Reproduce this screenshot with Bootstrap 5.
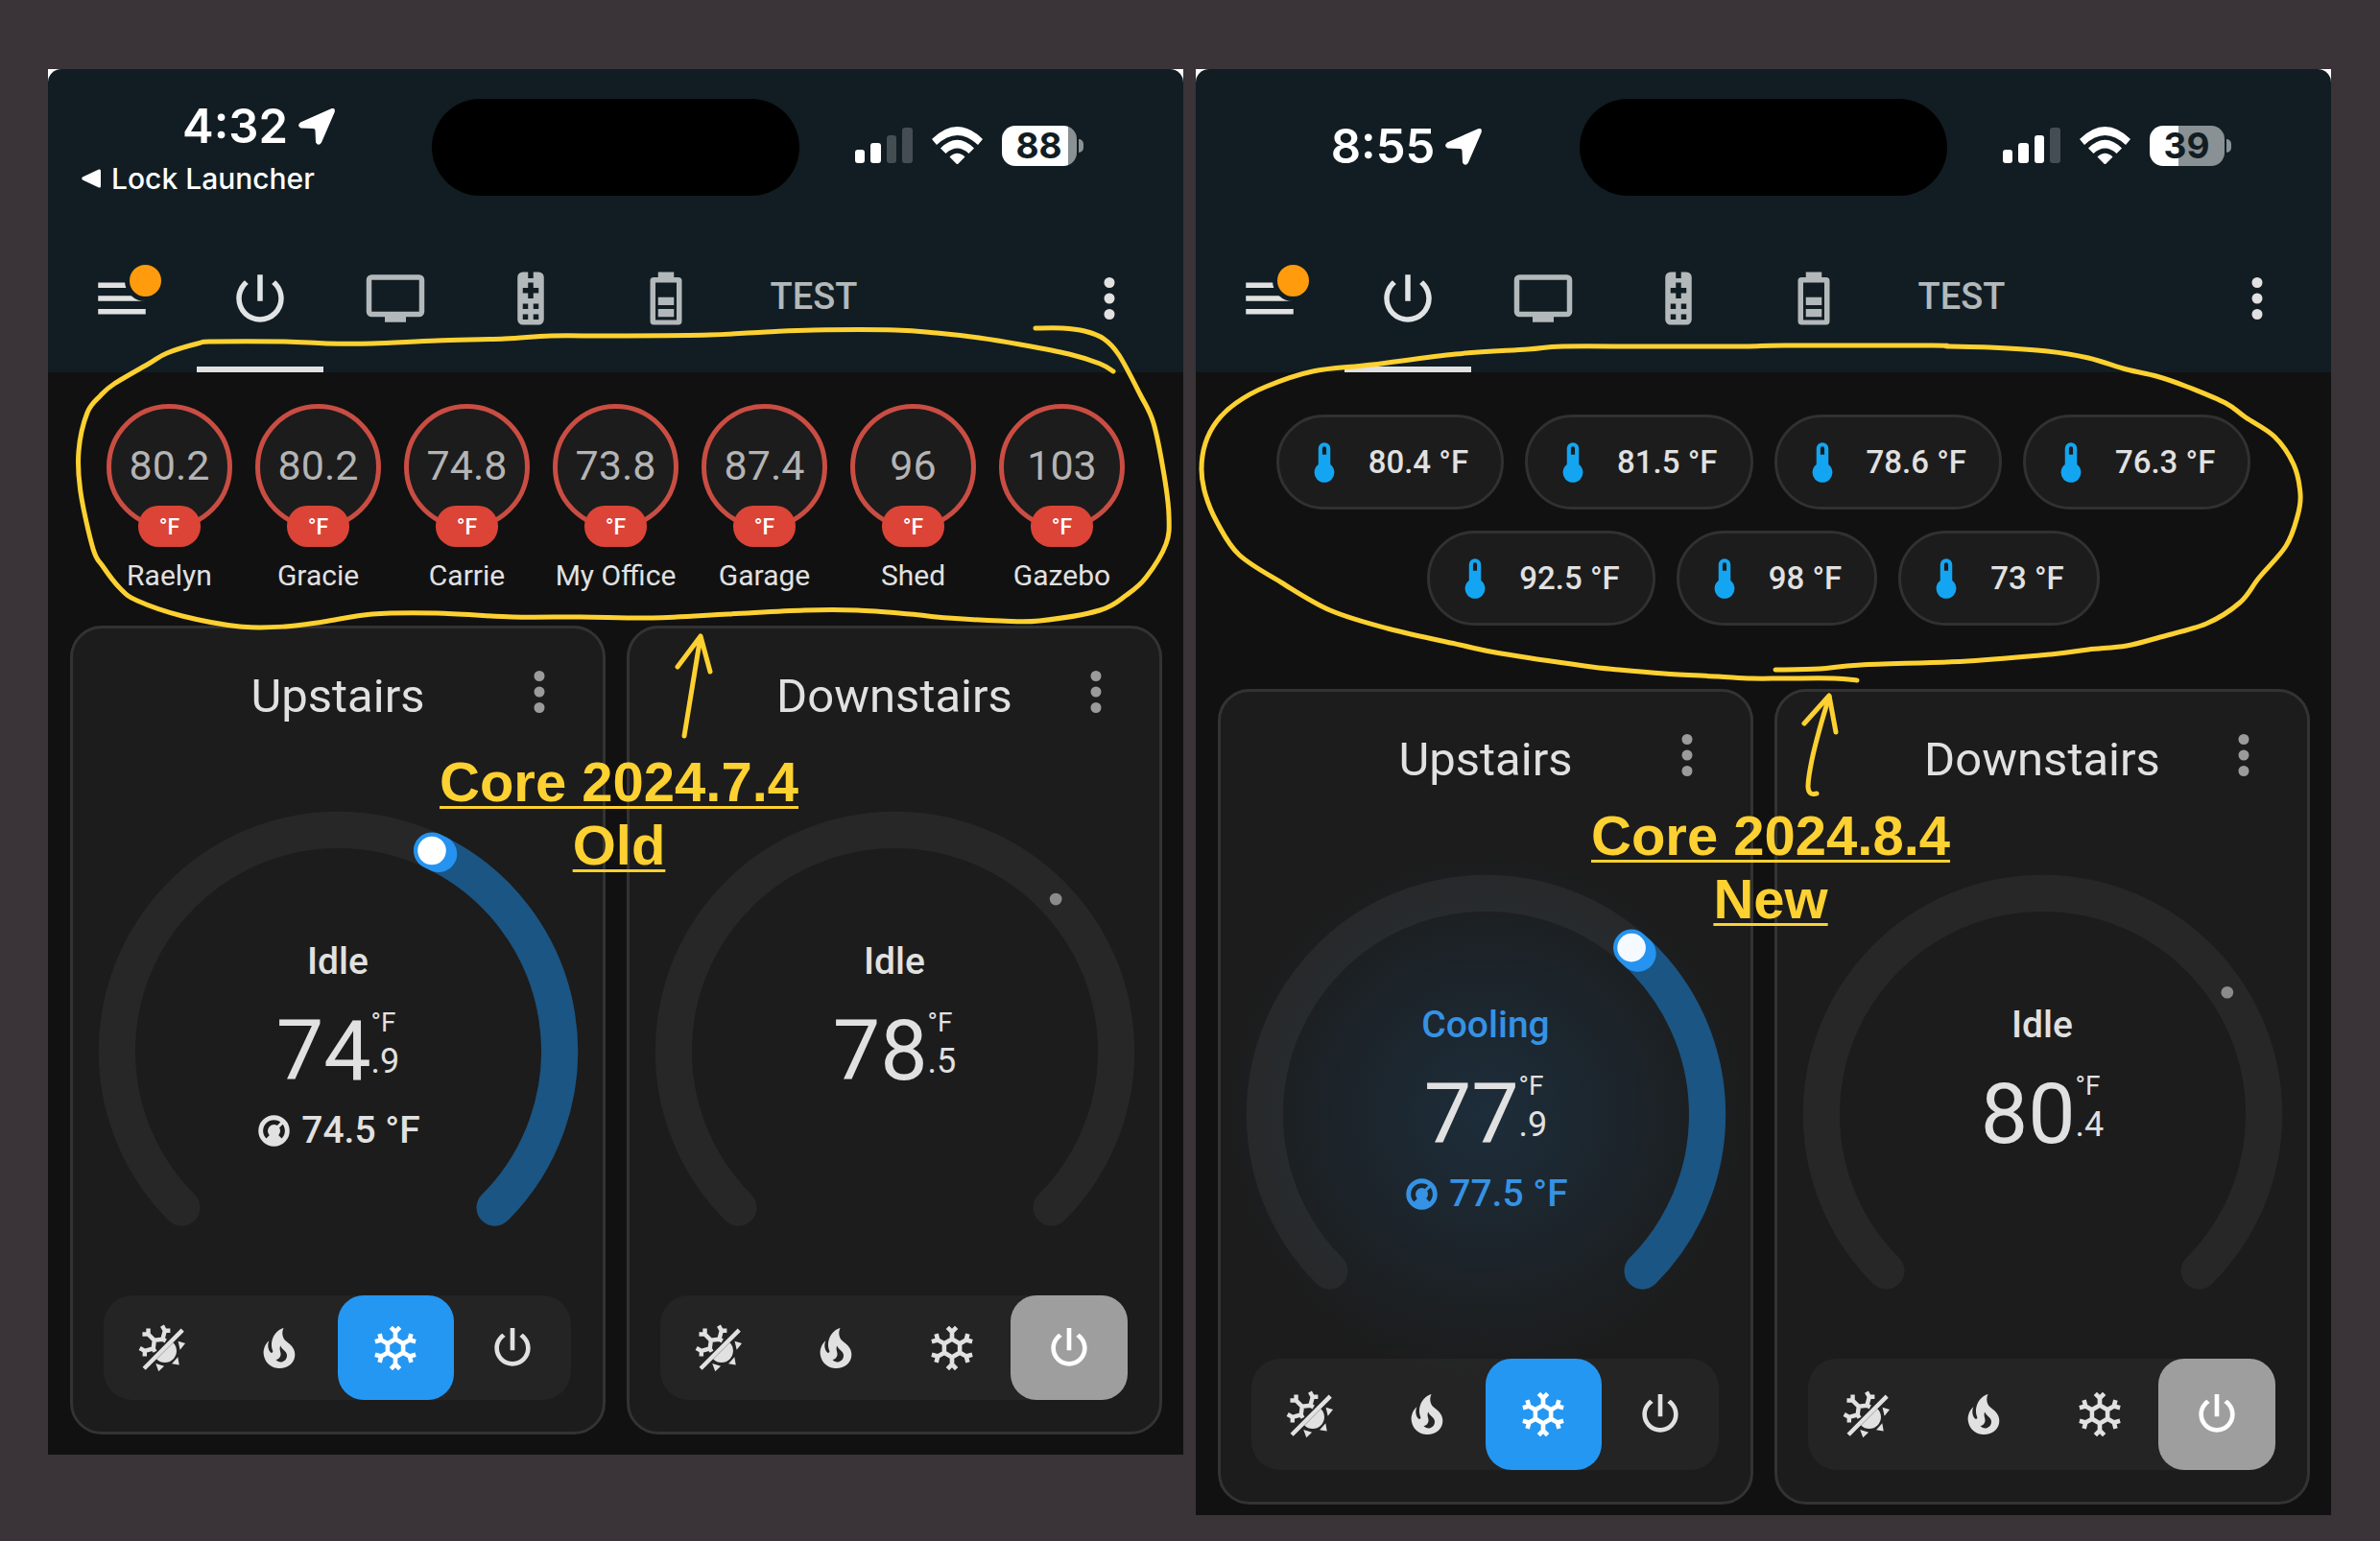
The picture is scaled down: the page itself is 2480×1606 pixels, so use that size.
<!DOCTYPE html>
<html lang="en" data-bs-theme="dark">
<head>
<meta charset="utf-8">
<meta name="viewport" content="width=device-width, initial-scale=1">
<title>Badges: Core 2024.7.4 and Core 2024.8.4</title>
<link rel="stylesheet" href="https://cdn.jsdelivr.net/npm/bootstrap@5.3.0/dist/css/bootstrap.min.css">
<style>
  body { background: #3a3337; font-family: Roboto, "Liberation Sans", sans-serif; color: #e1e1e1; }
  svg { display: block; fill: currentColor; flex: none; }
  .stage { padding: 72px 51px 28px 50px; gap: 13px; }
  .phone { flex: 1 1 0; min-width: 0; background: #fff; }
  .phone-head { background: #111d23; border-radius: 14px 14px 0 0; }
  .phone-body { background: #111; }

  .statusbar { height: 162px; font-family: Inter, "Liberation Sans", sans-serif; color: #fff; }
  .status-side { flex: 1 1 0; }
  .clock { font-size: 49px; line-height: 58px; font-weight: 600; gap: 11px; padding-left: 39px; }
  .clock-solo { margin-top: 52px; }
  .clock-top { margin-top: 31px; }
  .back-link { font-size: 30px; line-height: 44px; font-weight: 500; gap: 11px; margin: 3px 0 0 35px; color: #fff; text-decoration: none; }
  .island { width: 383px; height: 101px; margin-top: 31px; border-radius: 51px; background: #000; }
  .indicators { height: 97px; margin-top: 31px; gap: 20px; padding-right: 47px; }
  .power-level { width: 78px; height: 42px; border-radius: 14px; font-size: 37px; line-height: 42px; font-weight: 700; text-align: center; color: #111d23; }
  .level-88 { background: linear-gradient(90deg, #fff 88%, #8a9194 88%); }
  .level-39 { background: linear-gradient(90deg, #fff 39%, #8a9194 39%); }
  .power-nub { width: 5px; height: 14px; margin-left: 2px; border-radius: 0 7px 7px 0; background: #8a9194; }

  .toolbar { height: 154px; padding: 0 44px; }
  .plain-btn { border: 0; padding: 0; background: none; color: #e1e1e1; }
  .menu-btn { position: relative; }
  .menu-btn::after { content: ""; position: absolute; left: 36px; top: -7px; width: 43px; height: 43px; border: 5px solid #111d23; border-radius: 50%; background: #ff9b0d; }
  .view-tabs { margin-left: 40px; }
  .view-tab { position: relative; width: 141px; height: 154px; border: 0; padding: 0 0 4px; background: none; color: #b3b8ba; font-size: 38px; font-weight: 500; }
  .view-tab svg { margin: 4px auto 0; }
  .view-tab.current { color: #e1e4e5; }
  .view-tab.current::after { content: ""; position: absolute; left: 5px; right: 4px; bottom: 0; height: 6px; background: #e1e1e4; }
  .tab-text { width: 168px; }

  .old-badges { padding: 33px 0; gap: 24px; }
  .old-badge { width: 131px; }
  .ring { position: relative; width: 131px; height: 131px; border: 5px solid #c94d43; border-radius: 50%; background: #1c1c1c; color: #b4b4b4; font-size: 43px; line-height: 119px; text-align: center; }
  .ring-unit { position: absolute; left: 28px; top: 101px; width: 65px; height: 43px; border-radius: 21px; background: #db4437; color: #fff; font-size: 23px; line-height: 45px; font-weight: 500; }
  .old-name { margin-top: 28px; font-size: 30px; line-height: 39px; text-align: center; white-space: nowrap; }

  .new-badges { padding: 44px 44px 66px; gap: 22px; }
  .new-badge { height: 99px; border: 3px solid #313131; border-radius: 50px; background: #1c1c1c; padding: 0 34px 0 22px; gap: 21px; font-size: 33px; font-weight: 500; color: #e1e1e1; }
  .new-badge svg { color: #13a5f1; }

  .cards { gap: 22px; padding: 0 22px 21px 23px; }
  .cards-short { padding-bottom: 11px; }
  .climate { position: relative; flex: 1 1 0; border: 3px solid #333; border-radius: 33px; background: #1c1c1c; padding: 39px 0 33px; }
  .climate h2 { margin: 0 0 83px; font-size: 49px; line-height: 64px; font-weight: 400; text-align: center; color: #e1e1e1; }
  .more-btn { position: absolute; right: 33px; top: 33px; color: #9b9b9b; }
  .dial { position: relative; width: 509px; max-width: 100%; margin: 0 auto; }
  .dial > svg { width: 100%; height: auto; overflow: visible; fill: none; }
  .readout { position: absolute; inset: 137px 0 0; font-size: 39px; line-height: 48px; font-weight: 500; }
  .temp { margin: 19px 0 9px; font-weight: 400; }
  .temp-whole { font-size: 88px; line-height: 100px; }
  .temp-unit { font-size: 28px; line-height: 41px; }
  .temp-part { font-size: 36px; line-height: 41px; }
  .target { gap: 9px; }
  .cooling { color: #3592e4; }
  .modes { height: 109px; margin: 0 33px 0 32px; border-radius: 30px; background: #242424; }
  .modes-tall { height: 116px; }
  .mode { flex: 1 1 0; border: 0; padding: 0; border-radius: 27px; background: none; color: #e1e1e1; }
  .mode.cool-on { background: #2497f3; color: #fff; }
  .mode.off-on { background: #9e9e9e; color: #fff; }

  .ink { position: absolute; left: 0; top: 0; width: 100%; pointer-events: none; fill: none; stroke: #fdd131; stroke-width: 5; stroke-linecap: round; stroke-linejoin: round; }
  .note { position: absolute; left: 408px; top: 710px; font-family: "Liberation Sans", Arial, sans-serif; font-size: 58px; line-height: 66px; font-weight: 700; text-align: center; white-space: nowrap; color: #fdd131; text-decoration: underline 3px; text-underline-offset: 5px; text-decoration-skip-ink: none; }
  .note-new { left: 412px; top: 766px; }
</style>
</head>
<body>

<svg width="0" height="0" class="position-absolute" aria-hidden="true">
  <symbol id="i-arrow" viewBox="0 0 38 38"><path d="M33.500 .4Q39-1.500 37.600 4L24 35.500Q21 40 18 35.500L17.500 23Q17.400 21 15.500 20.900L2.400 20.600Q-2 18 2 14.400Z"/></symbol>
  <symbol id="i-wifi" viewBox="0 0 53 39"><path d="M0 13Q26.500-13 53 13L48 19Q26.500-1 5 19ZM9 22.500Q26.500 5 44 22.500L38.500 28Q26.500 17 14.500 28ZM18.500 31.500Q26.500 24 34.500 31.500L27.600 38.500Q26.500 39.500 25.400 38.500Z"/></symbol>
  <symbol id="i-menu" viewBox="0 0 24 24"><path d="M3 6H21V8H3V6M3 11H21V13H3V11M3 16H21V18H3V16Z"/></symbol>
  <symbol id="i-standby" viewBox="0 0 24 24"><path d="M13,3H11V13H13V3M17.830,5.170L16.410,6.590C18.050,7.910 19,9.900 19,12A7,7 0 0,1 12,19C8.140,19 5,15.880 5,12C5,9.910 5.950,7.910 7.580,6.580L6.170,5.170C4.160,6.870 3,9.370 3,12A9,9 0 0,0 12,21A9,9 0 0,0 21,12C21,9.370 19.840,6.870 17.830,5.170"/></symbol>
  <symbol id="i-tv" viewBox="0 0 24 24"><path d="M21,17H3V5H21M21,3H3A2,2 0 0,0 1,5V17A2,2 0 0,0 3,19H8V21H16V19H21A2,2 0 0,0 23,17V5A2,2 0 0,0 21,3Z"/></symbol>
  <symbol id="i-remote" viewBox="0 0 24 24"><path fill-rule="evenodd" d="M9 2H11V4.400H13V2H15A2 2 0 0 1 17 4V20A2 2 0 0 1 15 22H9A2 2 0 0 1 7 20V4A2 2 0 0 1 9 2ZM11 6V8H9V10H11V12H13V10H15V8H13V6ZM9 14V16H11V14ZM13 14V16H15V14ZM9 18V20H11V18ZM13 18V20H15V18Z"/></symbol>
  <symbol id="i-battery" viewBox="0 0 24 24"><path fill-rule="evenodd" d="M9 2H15V4H16.670A1.330 1.330 0 0 1 18 5.330V20.670A1.330 1.330 0 0 1 16.670 22H7.330A1.330 1.330 0 0 1 6 20.670V5.330A1.330 1.330 0 0 1 7.330 4H9ZM8 6V20.200H16V6Z"/><path d="M9 11.500H15V14.500H9ZM9 16H15V19H9Z"/></symbol>
  <symbol id="i-dots" viewBox="0 0 24 24"><circle cx="12" cy="6" r="2"/><circle cx="12" cy="12" r="2"/><circle cx="12" cy="18" r="2"/></symbol>
  <symbol id="i-thermo" viewBox="0 0 24 24"><path fill-rule="evenodd" d="M15 13V5A3 3 0 0 0 9 5V13A5 5 0 1 0 15 13M12 4A1 1 0 0 1 13 5V8H11V5A1 1 0 0 1 12 4Z"/></symbol>
  <symbol id="i-gauge" viewBox="0 0 24 24"><path d="M16.950,16.950L14.830,14.830C15.550,14.100 16,13.100 16,12C16,11.260 15.790,10.570 15.430,10L17.600,7.810C18.500,9 19,10.430 19,12C19,13.930 18.220,15.680 16.950,16.950M12,5C13.570,5 15,5.500 16.190,6.400L14,8.560C13.430,8.210 12.740,8 12,8A4,4 0 0,0 8,12C8,13.100 8.450,14.100 9.170,14.830L7.050,16.950C5.780,15.680 5,13.930 5,12A7,7 0 0,1 12,5M12,2A10,10 0 0,0 2,12A10,10 0 0,0 12,22A10,10 0 0,0 22,12A10,10 0 0,0 12,2Z"/></symbol>
  <symbol id="i-off" viewBox="0 0 24 24"><path d="M16.560,5.440L15.110,6.890C16.840,7.940 18,9.830 18,12A6,6 0 0,1 12,18A6,6 0 0,1 6,12C6,9.830 7.160,7.940 8.880,6.880L7.440,5.440C5.360,6.880 4,9.280 4,12A8,8 0 0,0 12,20A8,8 0 0,0 20,12C20,9.280 18.640,6.880 16.560,5.440M13,3H11V13H13"/></symbol>
  <symbol id="i-fire" viewBox="0 0 24 24"><path d="M17.660 11.200C17.430 10.900 17.150 10.640 16.890 10.380C16.220 9.780 15.460 9.350 14.820 8.720C13.330 7.260 13 4.850 13.950 3C13 3.230 12.170 3.750 11.460 4.320C8.870 6.400 7.850 10.070 9.070 13.220C9.110 13.320 9.150 13.420 9.150 13.550C9.150 13.770 9 13.970 8.800 14.050C8.570 14.150 8.330 14.090 8.140 13.930C8.080 13.880 8.040 13.830 8 13.760C6.870 12.330 6.690 10.280 7.450 8.640C5.780 10 4.870 12.300 5 14.470C5.060 14.970 5.120 15.470 5.290 15.970C5.430 16.570 5.700 17.170 6 17.700C7.080 19.430 8.950 20.670 10.960 20.920C13.100 21.190 15.390 20.800 17.030 19.320C18.860 17.660 19.500 15 18.560 12.720L18.430 12.460C18.220 12 17.660 11.200 17.660 11.200M14.500 17.500C14.220 17.740 13.760 18 13.400 18.100C12.280 18.500 11.160 17.940 10.500 17.280C11.690 17 12.400 16.120 12.610 15.230C12.780 14.430 12.460 13.770 12.330 13C12.210 12.260 12.230 11.630 12.500 10.940C12.690 11.320 12.890 11.700 13.130 12C13.900 13 15.110 13.440 15.370 14.800C15.410 14.940 15.430 15.080 15.430 15.230C15.460 16.050 15.100 16.950 14.500 17.500Z"/></symbol>
  <symbol id="i-snow" viewBox="0 0 24 24"><path d="M20.790,13.950L18.460,14.570L16.460,13.440V10.560L18.460,9.430L20.790,10.050L21.310,8.120L19.540,7.650L20,5.880L18.070,5.360L17.450,7.690L15.450,8.820L13,7.380V5.120L14.710,3.410L13.290,2L12,3.290L10.710,2L9.290,3.410L11,5.120V7.380L8.500,8.820L6.500,7.690L5.920,5.360L4,5.880L4.470,7.650L2.700,8.120L3.220,10.050L5.550,9.430L7.550,10.560V13.450L5.550,14.580L3.220,13.960L2.700,15.890L4.470,16.360L4,18.120L5.930,18.640L6.550,16.310L8.550,15.180L11,16.620V18.880L9.290,20.590L10.710,22L12,20.710L13.290,22L14.700,20.590L13,18.880V16.620L15.500,15.170L17.500,16.300L18.120,18.630L20,18.120L19.530,16.350L21.300,15.880L20.790,13.950M9.500,10.560L12,9.110L14.500,10.560V13.440L12,14.890L9.500,13.440V10.560Z"/></symbol>
  <symbol id="i-auto" viewBox="0 0 24 24">
    <path d="M16.900 9.500A5 5 0 0 1 9.500 16.900ZM19.100 8.900L22.300 9.900L20 12.800ZM19 16L19.600 19.500L16.300 19ZM9.100 18.900L12.900 20L10.400 22.400Z"/>
    <path fill="none" stroke="currentColor" stroke-width="1.900" d="M3.900 21.100L21.100 3.900M12 2L13.200 4.200L15.600 4.200M13.200 4.200L12.200 8L8.500 8.500L8 12.200L4.200 13.200M12.200 8L13.600 8.800M8 12.200L8.800 13.600M2 12L4.200 13.200L4.200 15.600M8.500 8.500L5.500 5.500M5.800 3.200V5.800H3.200"/>
  </symbol>
  <radialGradient id="glow"><stop offset="0" stop-color="#2196f3" stop-opacity=".14"/><stop offset=".3" stop-color="#2196f3" stop-opacity=".1"/><stop offset=".65" stop-color="#2196f3" stop-opacity=".05"/><stop offset="1" stop-color="#2196f3" stop-opacity="0"/></radialGradient>
</svg>

<main class="stage d-flex align-items-start position-relative">

  <section class="phone position-relative" aria-label="Core 2024.7.4">
    <header class="phone-head">
      <div class="statusbar d-flex">
        <div class="status-side">
          <div class="clock clock-top d-flex align-items-center justify-content-center"><span>4:32</span><svg width="38" height="38"><use href="#i-arrow"/></svg></div>
          <a class="back-link d-flex align-items-center" href="#"><svg width="20" height="20" viewBox="0 0 20 20"><path d="M18 .5Q20 0 20 2V18Q20 20 18 19.500L1 11.500Q-.5 10 1 8.500Z"/></svg>Lock Launcher</a>
        </div>
        <div class="island"></div>
        <div class="status-side">
          <div class="indicators d-flex align-items-center justify-content-center">
            <svg width="60" height="37" viewBox="0 0 60 37"><rect y="23" width="10" height="14" rx="3"/><rect x="16" y="16" width="11" height="21" rx="3"/><g fill="#444e52"><rect x="33" y="8" width="10" height="29" rx="3"/><rect x="49" width="11" height="37" rx="3"/></g></svg>
            <svg width="53" height="39"><use href="#i-wifi"/></svg>
            <div class="d-flex align-items-center"><div class="power-level level-88">88</div><div class="power-nub"></div></div>
          </div>
        </div>
      </div>
      <nav class="toolbar d-flex align-items-center">
        <button class="plain-btn menu-btn" aria-label="Menu"><svg width="66" height="66"><use href="#i-menu"/></svg></button>
        <div class="view-tabs d-flex">
          <button class="view-tab current" aria-label="Power"><svg width="66" height="66"><use href="#i-standby"/></svg></button>
          <button class="view-tab" aria-label="Television"><svg width="66" height="66"><use href="#i-tv"/></svg></button>
          <button class="view-tab" aria-label="Remote"><svg width="66" height="66"><use href="#i-remote"/></svg></button>
          <button class="view-tab" aria-label="Batteries"><svg width="66" height="66"><use href="#i-battery"/></svg></button>
          <button class="view-tab tab-text">TEST</button>
        </div>
        <button class="plain-btn ms-auto" aria-label="More"><svg width="66" height="66"><use href="#i-dots"/></svg></button>
      </nav>
    </header>
    <div class="phone-body">
      <div class="old-badges d-flex justify-content-center">
        <div class="old-badge"><div class="ring">80.2<span class="ring-unit">°F</span></div><div class="old-name">Raelyn</div></div>
        <div class="old-badge"><div class="ring">80.2<span class="ring-unit">°F</span></div><div class="old-name">Gracie</div></div>
        <div class="old-badge"><div class="ring">74.8<span class="ring-unit">°F</span></div><div class="old-name">Carrie</div></div>
        <div class="old-badge"><div class="ring">73.8<span class="ring-unit">°F</span></div><div class="old-name">My Office</div></div>
        <div class="old-badge"><div class="ring">87.4<span class="ring-unit">°F</span></div><div class="old-name">Garage</div></div>
        <div class="old-badge"><div class="ring">96<span class="ring-unit">°F</span></div><div class="old-name">Shed</div></div>
        <div class="old-badge"><div class="ring">103<span class="ring-unit">°F</span></div><div class="old-name">Gazebo</div></div>
      </div>
      <div class="cards d-flex">
        <article class="climate">
          <h2>Upstairs</h2>
          <button class="plain-btn more-btn" aria-label="Upstairs options"><svg width="66" height="66"><use href="#i-dots"/></svg></button>
          <div class="dial">
            <svg viewBox="0 0 320 320" stroke-width="24" stroke-linecap="round">
              <path stroke="#fff" stroke-opacity=".05" d="M57.470 262.530A145 145 0 1 1 262.530 262.530"/>
              <path stroke="#1a5583" d="M225.800 30.800A145 145 0 0 1 262.530 262.530"/>
              <path stroke="#2593ef" d="M221.300 28.600L225.800 30.800"/><circle cx="221.300" cy="28.600" r="9.300" fill="#fff" stroke="none"/>
            </svg>
            <div class="readout text-center">
              <div>Idle</div>
              <div class="temp d-flex justify-content-center align-items-start"><span class="temp-whole">74</span><span class="d-flex flex-column align-items-start"><span class="temp-unit">°F</span><span class="temp-part">.9</span></span></div>
              <div class="target d-flex justify-content-center align-items-center"><svg width="39" height="39"><use href="#i-gauge"/></svg>74.5 °F</div>
            </div>
          </div>
          <div class="modes d-flex">
            <button class="mode" aria-label="Heat/cool"><svg class="mx-auto" width="56" height="56"><use href="#i-auto"/></svg></button>
            <button class="mode" aria-label="Heat"><svg class="mx-auto" width="56" height="56"><use href="#i-fire"/></svg></button>
            <button class="mode cool-on" aria-label="Cool"><svg class="mx-auto" width="56" height="56"><use href="#i-snow"/></svg></button>
            <button class="mode" aria-label="Off"><svg class="mx-auto" width="56" height="56"><use href="#i-off"/></svg></button>
          </div>
        </article>
        <article class="climate">
          <h2>Downstairs</h2>
          <button class="plain-btn more-btn" aria-label="Downstairs options"><svg width="66" height="66"><use href="#i-dots"/></svg></button>
          <div class="dial">
            <svg viewBox="0 0 320 320" stroke-width="24" stroke-linecap="round">
              <path stroke="#fff" stroke-opacity=".05" d="M57.470 262.530A145 145 0 1 1 262.530 262.530"/>
              <circle cx="265.400" cy="60.400" r="4" fill="#8b8b8b" stroke="none"/>
            </svg>
            <div class="readout text-center">
              <div>Idle</div>
              <div class="temp d-flex justify-content-center align-items-start"><span class="temp-whole">78</span><span class="d-flex flex-column align-items-start"><span class="temp-unit">°F</span><span class="temp-part">.5</span></span></div>
            </div>
          </div>
          <div class="modes d-flex">
            <button class="mode" aria-label="Heat/cool"><svg class="mx-auto" width="56" height="56"><use href="#i-auto"/></svg></button>
            <button class="mode" aria-label="Heat"><svg class="mx-auto" width="56" height="56"><use href="#i-fire"/></svg></button>
            <button class="mode" aria-label="Cool"><svg class="mx-auto" width="56" height="56"><use href="#i-snow"/></svg></button>
            <button class="mode off-on" aria-label="Off"><svg class="mx-auto" width="56" height="56"><use href="#i-off"/></svg></button>
          </div>
        </article>
      </div>
    </div>
    <div class="note">Core 2024.7.4<br>Old</div>
  </section>

  <section class="phone position-relative" aria-label="Core 2024.8.4">
    <header class="phone-head">
      <div class="statusbar d-flex">
        <div class="status-side">
          <div class="clock clock-solo d-flex align-items-center justify-content-center"><span>8:55</span><svg width="38" height="38"><use href="#i-arrow"/></svg></div>
        </div>
        <div class="island"></div>
        <div class="status-side">
          <div class="indicators d-flex align-items-center justify-content-center">
            <svg width="60" height="37" viewBox="0 0 60 37"><rect y="23" width="10" height="14" rx="3"/><rect x="16" y="16" width="11" height="21" rx="3"/><rect x="33" y="8" width="10" height="29" rx="3"/><rect x="49" width="11" height="37" rx="3" fill="#444e52"/></svg>
            <svg width="53" height="39"><use href="#i-wifi"/></svg>
            <div class="d-flex align-items-center"><div class="power-level level-39">39</div><div class="power-nub"></div></div>
          </div>
        </div>
      </div>
      <nav class="toolbar d-flex align-items-center">
        <button class="plain-btn menu-btn" aria-label="Menu"><svg width="66" height="66"><use href="#i-menu"/></svg></button>
        <div class="view-tabs d-flex">
          <button class="view-tab current" aria-label="Power"><svg width="66" height="66"><use href="#i-standby"/></svg></button>
          <button class="view-tab" aria-label="Television"><svg width="66" height="66"><use href="#i-tv"/></svg></button>
          <button class="view-tab" aria-label="Remote"><svg width="66" height="66"><use href="#i-remote"/></svg></button>
          <button class="view-tab" aria-label="Batteries"><svg width="66" height="66"><use href="#i-battery"/></svg></button>
          <button class="view-tab tab-text">TEST</button>
        </div>
        <button class="plain-btn ms-auto" aria-label="More"><svg width="66" height="66"><use href="#i-dots"/></svg></button>
      </nav>
    </header>
    <div class="phone-body">
      <div class="new-badges d-flex flex-wrap justify-content-center">
        <button class="new-badge d-flex align-items-center"><svg width="50" height="50"><use href="#i-thermo"/></svg>80.4 °F</button>
        <button class="new-badge d-flex align-items-center"><svg width="50" height="50"><use href="#i-thermo"/></svg>81.5 °F</button>
        <button class="new-badge d-flex align-items-center"><svg width="50" height="50"><use href="#i-thermo"/></svg>78.6 °F</button>
        <button class="new-badge d-flex align-items-center"><svg width="50" height="50"><use href="#i-thermo"/></svg>76.3 °F</button>
        <button class="new-badge d-flex align-items-center"><svg width="50" height="50"><use href="#i-thermo"/></svg>92.5 °F</button>
        <button class="new-badge d-flex align-items-center"><svg width="50" height="50"><use href="#i-thermo"/></svg>98 °F</button>
        <button class="new-badge d-flex align-items-center"><svg width="50" height="50"><use href="#i-thermo"/></svg>73 °F</button>
      </div>
      <div class="cards cards-short d-flex">
        <article class="climate">
          <h2>Upstairs</h2>
          <button class="plain-btn more-btn" aria-label="Upstairs options"><svg width="66" height="66"><use href="#i-dots"/></svg></button>
          <div class="dial">
            <svg viewBox="0 0 320 320" stroke-width="24" stroke-linecap="round">
              <circle cx="160" cy="160" r="172" fill="url(#glow)" stroke="none"/>
              <path stroke="#fff" stroke-opacity=".05" d="M57.470 262.530A145 145 0 1 1 262.530 262.530"/>
              <path stroke="#1a5583" d="M259.400 54.500A145 145 0 0 1 262.530 262.530"/>
              <path stroke="#2593ef" d="M255.300 50.700L259.400 54.500"/><circle cx="255.300" cy="50.700" r="9.300" fill="#f4faff" stroke="none"/>
            </svg>
            <div class="readout text-center">
              <div class="cooling">Cooling</div>
              <div class="temp d-flex justify-content-center align-items-start"><span class="temp-whole">77</span><span class="d-flex flex-column align-items-start"><span class="temp-unit">°F</span><span class="temp-part">.9</span></span></div>
              <div class="target cooling d-flex justify-content-center align-items-center"><svg width="39" height="39"><use href="#i-gauge"/></svg>77.5 °F</div>
            </div>
          </div>
          <div class="modes modes-tall d-flex">
            <button class="mode" aria-label="Heat/cool"><svg class="mx-auto" width="56" height="56"><use href="#i-auto"/></svg></button>
            <button class="mode" aria-label="Heat"><svg class="mx-auto" width="56" height="56"><use href="#i-fire"/></svg></button>
            <button class="mode cool-on" aria-label="Cool"><svg class="mx-auto" width="56" height="56"><use href="#i-snow"/></svg></button>
            <button class="mode" aria-label="Off"><svg class="mx-auto" width="56" height="56"><use href="#i-off"/></svg></button>
          </div>
        </article>
        <article class="climate">
          <h2>Downstairs</h2>
          <button class="plain-btn more-btn" aria-label="Downstairs options"><svg width="66" height="66"><use href="#i-dots"/></svg></button>
          <div class="dial">
            <svg viewBox="0 0 320 320" stroke-width="24" stroke-linecap="round">
              <path stroke="#fff" stroke-opacity=".05" d="M57.470 262.530A145 145 0 1 1 262.530 262.530"/>
              <circle cx="280.900" cy="80" r="4" fill="#8b8b8b" stroke="none"/>
            </svg>
            <div class="readout text-center">
              <div>Idle</div>
              <div class="temp d-flex justify-content-center align-items-start"><span class="temp-whole">80</span><span class="d-flex flex-column align-items-start"><span class="temp-unit">°F</span><span class="temp-part">.4</span></span></div>
            </div>
          </div>
          <div class="modes modes-tall d-flex">
            <button class="mode" aria-label="Heat/cool"><svg class="mx-auto" width="56" height="56"><use href="#i-auto"/></svg></button>
            <button class="mode" aria-label="Heat"><svg class="mx-auto" width="56" height="56"><use href="#i-fire"/></svg></button>
            <button class="mode" aria-label="Cool"><svg class="mx-auto" width="56" height="56"><use href="#i-snow"/></svg></button>
            <button class="mode off-on" aria-label="Off"><svg class="mx-auto" width="56" height="56"><use href="#i-off"/></svg></button>
          </div>
        </article>
      </div>
    </div>
    <div class="note note-new">Core 2024.8.4<br>New</div>
  </section>

  <!-- hand-drawn loops and arrows; each data-line is a list of points joined by a smooth curve -->
  <svg class="ink" viewBox="0 0 2480 1606" aria-hidden="true">
    <path data-line="1160,387 1146,379 1114,369 1063,359 1020,352 976,347 933,344 848,344 798,346 739,349 640,350 574,350 526,353 455,355 388,358 340,358 297,356 222,356 206,358 174,368 155,379 119,400 105,412 91,430 82,470 84,513 97,572 107,590 125,613 143,626 190,642 250,653 297,653 337,648 388,640 455,639 534,643 605,643 680,644 759,640 838,636 893,636 948,640 988,644 1043,647 1083,647 1146,636 1174,620 1194,602 1215,567 1218,537 1213,495 1202,441 1188,411 1166,370 1150,353 1130,345 1107,342 1079,342"/>
    <path d="M713 767L730 663M706 695L730 663L740 700"/>
    <path data-line="1935,709 1911,707 1860,707 1825,707 1790,705 1734,702 1687,698 1651,694 1564,681 1521,672 1446,655 1386,636 1335,607 1291,578 1268,544 1256,515 1252,489 1256,462 1268,439 1288,420 1319,403 1368,387 1430,380 1517,369 1592,364 1628,361 1714,361 1817,361 1860,360 2014,360 2030,361 2073,362 2133,366 2176,373 2216,385 2247,392 2279,403 2319,420 2340,435 2370,455 2390,484 2397,515 2394,538 2382,569 2354,602 2334,628 2299,650 2251,664 2216,673 2176,677 2137,682 2050,689 1939,693 1896,697 1850,698"/>
    <path data-line="1906,726 1896,760 1888,792 1884,819 1887,827 1893,827"/>
    <path d="M1880 754L1906 725L1913 763"/>
  </svg>
</main>

<script src="https://cdn.jsdelivr.net/npm/bootstrap@5.3.0/dist/js/bootstrap.bundle.min.js"></script>
<script>
  // Catmull-Rom spline through the points of each data-line
  document.querySelectorAll('[data-line]').forEach(function (el) {
    var p = el.dataset.line.split(' ').map(function (s) { return s.split(',').map(Number); });
    var d = 'M' + p[0];
    for (var i = 0; i < p.length - 1; i++) {
      var a = p[Math.max(i - 1, 0)], b = p[i], c = p[i + 1], e = p[Math.min(i + 2, p.length - 1)];
      d += 'C' + [b[0] + (c[0] - a[0]) / 6, b[1] + (c[1] - a[1]) / 6, c[0] - (e[0] - b[0]) / 6, c[1] - (e[1] - b[1]) / 6, c[0], c[1]].join(' ');
    }
    el.setAttribute('d', d);
  });
</script>
</body>
</html>
